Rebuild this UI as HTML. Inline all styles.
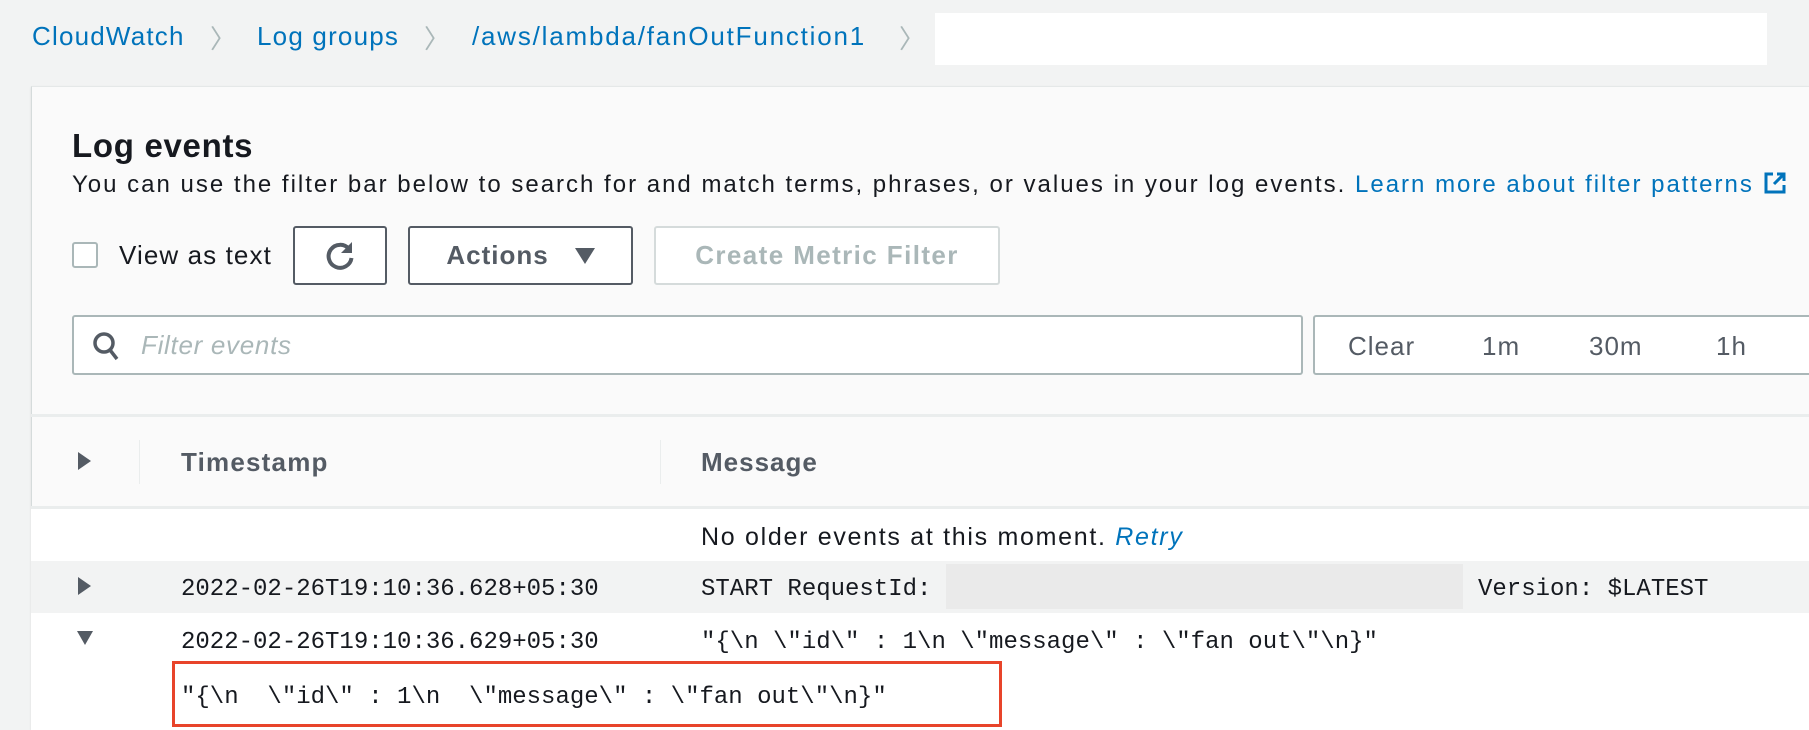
<!DOCTYPE html>
<html><head><meta charset="utf-8"><style>
*{box-sizing:border-box;margin:0;padding:0}
body{width:1809px;height:730px;overflow:hidden;background:#f2f3f3;font-family:"Liberation Sans",sans-serif;color:#16191f;position:relative}
.a{position:absolute;white-space:nowrap}
.bc{top:21px;font-size:26px;letter-spacing:1.2px;color:#0073bb}
.sep{top:19px;font-size:26px;color:#aab7b8}
.panel{position:absolute;left:31px;top:86px;right:0;bottom:0;background:#fafafa;border-left:1px solid #d5dbdb;border-top:1px solid #e5e8e8;box-shadow:0 1px 2px rgba(0,0,0,.1)}
.btn{position:absolute;border:2px solid #545b64;border-radius:3px;background:#fff;font-weight:bold;color:#545b64;font-size:26px;display:flex;align-items:center;justify-content:center}
.mono{font-family:"Liberation Mono",monospace;font-size:24px;color:#16191f}
.tr{font-size:26px;letter-spacing:1px;color:#545b64;top:331px}
</style></head><body>
<div class="a bc" style="left:32px">CloudWatch</div>
<div class="a sep" style="left:210px">〉</div>
<div class="a bc" style="left:257px">Log groups</div>
<div class="a sep" style="left:424px">〉</div>
<div class="a bc" style="left:472px;letter-spacing:1.8px">/aws/lambda/fanOutFunction1</div>
<div class="a sep" style="left:899px">〉</div>
<div class="a" style="left:935px;top:13px;width:832px;height:52px;background:#fff"></div>

<div class="panel"></div>
<div class="a" style="left:72px;top:127px;font-size:33px;letter-spacing:0.7px;font-weight:bold">Log events</div>
<div class="a" style="left:72px;top:171px;font-size:24px;letter-spacing:2px">You can use the filter bar below to search for and match terms, phrases, or values in your log events. <span style="color:#0073bb">Learn more about filter patterns</span> <svg style="vertical-align:-3px" width="24" height="24" viewBox="0 0 24 24"><path d="M10 3H3v18h18v-7M14 3h7v7M21 3L11 13" fill="none" stroke="#0073bb" stroke-width="3"/></svg></div>

<div class="a" style="left:72px;top:242px;width:26px;height:26px;border:2px solid #aab7b8;border-radius:3px;background:#fff"></div>
<div class="a" style="left:119px;top:240px;font-size:26px;letter-spacing:1.1px">View as text</div>
<div class="btn" style="left:293px;top:226px;width:94px;height:59px"><svg width="34" height="34" viewBox="0 0 34 34"><path d="M26 10A11.5 11.5 0 1 0 28.5 19" fill="none" stroke="#545b64" stroke-width="4"/><path d="M29 3v11h-11z" fill="#545b64"/></svg></div>
<div class="btn" style="left:408px;top:226px;width:225px;height:59px;letter-spacing:1px">Actions<svg style="margin-left:26px" width="20" height="16" viewBox="0 0 20 16"><path d="M0 0h20L10 16z" fill="#545b64"/></svg></div>
<div class="btn" style="left:654px;top:226px;width:346px;height:59px;border-color:#d5dbdb;color:#aab7b8;letter-spacing:1.4px">Create Metric Filter</div>

<div class="a" style="left:72px;top:315px;width:1231px;height:60px;border:2px solid #aab7b8;border-radius:3px;background:#fff"></div>
<svg class="a" style="left:92px;top:331px" width="28" height="30" viewBox="0 0 28 30"><circle cx="12" cy="12" r="9" fill="none" stroke="#545b64" stroke-width="3.5"/><path d="M18 19l7 9" stroke="#545b64" stroke-width="3.5"/></svg>
<div class="a" style="left:141px;top:330px;font-size:26px;letter-spacing:0.7px;font-style:italic;color:#aab7b8">Filter events</div>
<div class="a" style="left:1313px;top:315px;width:520px;height:60px;border:2px solid #aab7b8;border-radius:3px;background:#fff"></div>
<div class="a tr" style="left:1348px">Clear</div>
<div class="a tr" style="left:1482px">1m</div>
<div class="a tr" style="left:1589px">30m</div>
<div class="a tr" style="left:1716px">1h</div>

<div class="a" style="left:31px;top:414px;right:0;height:3px;background:#eaeded"></div>
<div class="a" style="left:31px;top:506px;right:0;height:3px;background:#eaeded"></div>
<div class="a" style="left:31px;top:509px;right:0;bottom:0;background:#fff"></div>
<div class="a" style="left:78px;top:452px;width:0;height:0;border-left:13px solid #545b64;border-top:9px solid transparent;border-bottom:9px solid transparent"></div>
<div class="a" style="left:139px;top:440px;width:1px;height:44px;background:#eaeded"></div>
<div class="a" style="left:660px;top:440px;width:1px;height:44px;background:#eaeded"></div>
<div class="a" style="left:181px;top:447px;font-size:26px;letter-spacing:1.2px;font-weight:bold;color:#545b64">Timestamp</div>
<div class="a" style="left:701px;top:447px;font-size:26px;letter-spacing:1px;font-weight:bold;color:#545b64">Message</div>

<div class="a" style="left:701px;top:523px;font-size:25px;letter-spacing:1.7px">No older events at this moment. <i style="color:#0073bb">Retry</i></div>
<div class="a" style="left:31px;top:561px;right:0;height:52px;background:#f2f3f3"></div>
<div class="a" style="left:78px;top:577px;width:0;height:0;border-left:13px solid #545b64;border-top:9px solid transparent;border-bottom:9px solid transparent"></div>
<div class="a mono" style="left:181px;top:576px">2022-02-26T19:10:36.628+05:30</div>
<div class="a mono" style="left:701px;top:576px">START RequestId:</div>
<div class="a" style="left:946px;top:564px;width:517px;height:45px;background:#eaeaea"></div>
<div class="a mono" style="left:1478px;top:576px">Version: $LATEST</div>
<div class="a" style="left:77px;top:631px;width:0;height:0;border-top:14px solid #545b64;border-left:8px solid transparent;border-right:8px solid transparent"></div>
<div class="a mono" style="left:181px;top:629px">2022-02-26T19:10:36.629+05:30</div>
<div class="a mono" style="left:701px;top:629px">"{\n \"id\" : 1\n \"message\" : \"fan out\"\n}"</div>
<div class="a" style="left:172px;top:661px;width:830px;height:66px;border:3px solid #e8442a"></div>
<div class="a mono" style="left:181px;top:684px;white-space:pre">"{\n  \"id\" : 1\n  \"message\" : \"fan out\"\n}"</div>
</body></html>
